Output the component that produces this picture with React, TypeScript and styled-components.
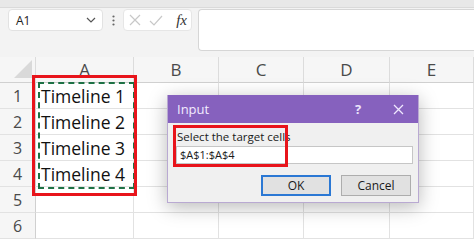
import * as React from 'react';
import styled, { createGlobalStyle } from 'styled-components';

const GlobalStyle = createGlobalStyle`
  html, body { margin: 0; padding: 0; background: #fff; }
  * { box-sizing: border-box; }
`;

const UISheet = styled.div`
  position: relative;
  width: 474px;
  height: 242px;
  overflow: hidden;
  background: #ffffff;
  font-family: 'Open Sans', 'Noto Sans', sans-serif;
`;

const TopStrip = styled.div`
  height: 8px;
  background: #e8e8e8;
  border-bottom: 1px solid #dadada;
`;

const FormulaBar = styled.div`
  display: flex;
  align-items: flex-start;
  height: 49px;
  padding-top: 1px;
  background: #f3f3f3;
`;

const NameBox = styled.div`
  display: flex;
  align-items: center;
  justify-content: space-between;
  margin-left: 8px;
  width: 95px;
  height: 22px;
  padding: 0 6px 0 7px;
  background: #fff;
  border: 1px solid #e2e2e2;
  border-radius: 4px;
  font-size: 12px;
  color: #222;
`;

const Dots = styled.div`
  width: 20px;
  height: 22px;
  display: flex;
  align-items: center;
  justify-content: center;
`;

const FxBox = styled.div`
  display: flex;
  align-items: center;
  gap: 8px;
  width: 69px;
  height: 22px;
  padding: 0 4px 0 5px;
  background: #fff;
  border: 1px solid #e6e6e6;
  border-radius: 4px;
`;

const Fx = styled.span`
  margin-left: auto;
  font-family: 'Liberation Serif', serif;
  font-style: italic;
  font-size: 15px;
  color: #333;
`;

const FormulaInput = styled.div`
  margin-left: 6px;
  flex: 1;
  height: 42px;
  background: #fff;
  border: 1px solid #d6d6d6;
  border-right: none;
  border-radius: 4px 0 0 4px;
`;

const Grid = styled.div`
  position: relative;
  display: grid;
  grid-template-columns: 36px 98px 85px 85px 86px 1fr;
  grid-template-rows: 26px;
  grid-auto-rows: 26px;
`;

const HeaderCell = styled.div`
  position: relative;
  display: flex;
  align-items: center;
  justify-content: center;
  background: #f6f6f6;
  border-right: 1px solid #dcdcdc;
  border-bottom: 1px solid #d0d0d0;
  font-size: 17px;
  color: #4a4a4a;
`;

const Corner = styled.div`
  position: absolute;
  right: 3px;
  bottom: 4px;
  width: 0;
  height: 0;
  border-left: 18px solid transparent;
  border-bottom: 18px solid #d9d9d9;
`;

const RowHead = styled.div`
  display: flex;
  align-items: center;
  justify-content: center;
  background: #f6f6f6;
  border-right: 1px solid #d0d0d0;
  border-bottom: 1px solid #e2e2e2;
  font-size: 16px;
  color: #4a4a4a;
`;

const Cell = styled.div`
  display: flex;
  align-items: center;
  padding-left: 5px;
  border-right: 1px solid #e2e2e2;
  border-bottom: 1px solid #e2e2e2;
  font-size: 17.5px;
  color: #111;
  white-space: nowrap;
`;

const RedBox = styled.div<{ $l: number; $t: number; $w: number; $h: number }>`
  position: absolute;
  left: ${(p) => p.$l}px;
  top: ${(p) => p.$t}px;
  width: ${(p) => p.$w}px;
  height: ${(p) => p.$h}px;
  border: 3px solid #e8141b;
  pointer-events: none;
`;

const Marching = styled.div`
  position: absolute;
  left: 38px;
  top: 25px;
  width: 97px;
  height: 107px;
  border: 2px dashed #1e7145;
  pointer-events: none;
`;

const Dialog = styled.div`
  position: absolute;
  left: 167px;
  top: 95px;
  width: 252px;
  height: 108px;
  background: #f0f0f0;
  border: 1px solid #b9a9d2;
  border-top: none;
  box-shadow: 0 4px 18px rgba(0, 0, 0, 0.28);
`;

const TitleBar = styled.div`
  display: flex;
  align-items: center;
  height: 28px;
  padding: 0 0 0 9px;
  background: #8661be;
  color: #f3ecff;
  font-size: 13px;
`;

const Title = styled.span`
  flex: 1;
`;

const TitleBtn = styled.span`
  width: 40px;
  display: flex;
  justify-content: center;
  font-size: 13px;
  font-weight: 700;
  color: #ece4fb;
`;

const Body = styled.div`
  position: relative;
  padding: 6px 5px 0 8px;
`;

const Label = styled.div`
  font-size: 11.5px;
  color: #1a1a1a;
  line-height: 16px;
  margin-left: 1px;
`;

const Input = styled.div`
  height: 18px;
  margin-top: 1px;
  padding-left: 3px;
  background: #fff;
  border: 1px solid #c6c6c6;
  font-size: 11px;
  line-height: 16px;
  color: #1a1a1a;
`;

const Buttons = styled.div`
  display: flex;
  justify-content: flex-end;
  gap: 10px;
  margin-top: 11px;
  padding-right: 2px;
`;

const Button = styled.div<{ $primary?: boolean }>`
  width: 70px;
  height: 21px;
  display: flex;
  align-items: center;
  justify-content: center;
  background: #e1e1e1;
  border: ${(p) => (p.$primary ? '2px solid #2b78d4' : '1px solid #adadad')};
  font-size: 12px;
  color: #1a1a1a;
`;

const cols = ['A', 'B', 'C', 'D', 'E'];
const rows = [1, 2, 3, 4, 5, 6];

export default function App() {
  return (
    <UISheet>
      <GlobalStyle />
      <TopStrip />
      <FormulaBar>
        <NameBox>
          <span>A1</span>
          <svg width="10" height="6" viewBox="0 0 10 6">
            <path d="M1 1l4 4 4-4" fill="none" stroke="#555" strokeWidth="1.2" />
          </svg>
        </NameBox>
        <Dots>
          <svg width="3" height="11" viewBox="0 0 3 11">
            <circle cx="1.5" cy="1.5" r="1.1" fill="#666" />
            <circle cx="1.5" cy="5.5" r="1.1" fill="#666" />
            <circle cx="1.5" cy="9.5" r="1.1" fill="#666" />
          </svg>
        </Dots>
        <FxBox>
          <svg width="12" height="12" viewBox="0 0 12 12">
            <path d="M1 1l10 10M11 1L1 11" stroke="#c8c8c8" strokeWidth="1.2" />
          </svg>
          <svg width="14" height="11" viewBox="0 0 14 11">
            <path d="M1 6l4 4 8-9" fill="none" stroke="#c8c8c8" strokeWidth="1.2" />
          </svg>
          <Fx>fx</Fx>
        </FxBox>
        <FormulaInput />
      </FormulaBar>
      <Grid>
        <HeaderCell>
          <Corner />
        </HeaderCell>
        {cols.map((c) => (
          <HeaderCell key={c}>{c}</HeaderCell>
        ))}
        {rows.map((r) => (
          <React.Fragment key={r}>
            <RowHead>{r}</RowHead>
            <Cell>{r <= 4 ? `Timeline ${r}` : ''}</Cell>
            <Cell />
            <Cell />
            <Cell />
            <Cell />
          </React.Fragment>
        ))}
        <Marching />
        <RedBox $l={32} $t={18} $w={105} $h={121} />
      </Grid>
      <Dialog>
        <TitleBar>
          <Title>Input</Title>
          <TitleBtn>?</TitleBtn>
          <TitleBtn>
            <svg width="11" height="11" viewBox="0 0 11 11">
              <path d="M1 1l9 9M10 1l-9 9" stroke="#f0e8ff" strokeWidth="1.3" />
            </svg>
          </TitleBtn>
        </TitleBar>
        <Body>
          <Label>Select the target cells</Label>
          <Input>$A$1:$A$4</Input>
          <Buttons>
            <Button $primary>OK</Button>
            <Button>Cancel</Button>
          </Buttons>
          <RedBox $l={5} $t={2} $w={115} $h={42} />
        </Body>
      </Dialog>
    </UISheet>
  );
}
